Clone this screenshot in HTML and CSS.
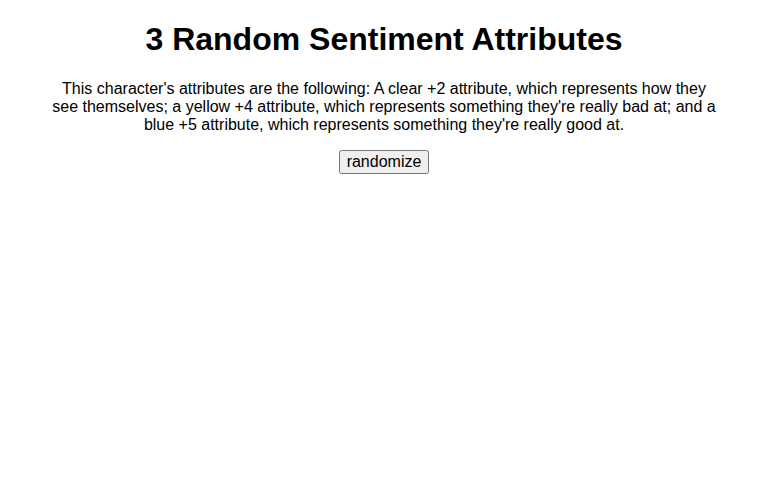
FILE: index.html
```html
<!DOCTYPE html>
<html>
<head>
<meta charset="utf-8">
<title>3 Random Sentiment Attributes</title>
<link rel="stylesheet" href="styles.css">
</head>
<body>
<main class="page">
  <h1 class="title">3 Random Sentiment Attributes</h1>
  <p class="result">This character's attributes are the following: A clear +2 attribute, which represents how they see themselves; a yellow +4 attribute, which represents something they're really bad at; and a blue +5 attribute, which represents something they're really good at.</p>
  <button class="randomize" type="button">randomize</button>
</main>
</body>
</html>
```

FILE: styles.css
```css
body {
  margin: 8px;
  font-family: "Liberation Sans", Arial, sans-serif;
  color: #000;
  background: #fff;
}
.page {
  text-align: center;
}
.title {
  font-size: 32px;
  font-weight: bold;
  margin: 13px 0 22.44px;
}
.result {
  font-size: 16px;
  line-height: 18px;
  max-width: 668px;
  margin: 16px auto;
}
.randomize {
  font-family: "Liberation Sans", Arial, sans-serif;
  font-size: 16px;
  padding: 1px 6px;
}
```
